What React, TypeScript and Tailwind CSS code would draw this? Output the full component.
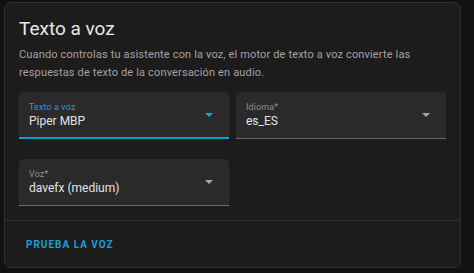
import React from 'react';

interface SelectFieldProps {
  label: string;
  value: string;
  focused?: boolean;
}

const SelectField = ({ label, value, focused = false }: SelectFieldProps) => {
  return (
    <div
      className={`relative h-[47px] rounded-t-[4px] bg-[#2a2a2a] ${
        focused ? 'border-b-2 border-[#0e9ad7]' : 'border-b border-[#6a6a6a]'
      }`}
    >
      <div
        className={`absolute left-[10px] top-[10px] text-[9px] leading-[10px] tracking-[0.1px] ${
          focused ? 'text-[#1a9fd8]' : 'text-[#8f8f8f]'
        }`}
      >
        {label}
      </div>
      <div className="absolute left-[10px] top-[21px] text-[12px] leading-[16px] text-[#e3e3e3]">{value}</div>
      <svg className="absolute right-[16px] top-[21px]" width="8" height="4" viewBox="0 0 8 4">
        <path d="M0 0 L8 0 L4 4 Z" fill={focused ? '#1a9fd8' : '#a8a8a8'} />
      </svg>
    </div>
  );
};

const App = () => {
  return (
    <div
      className="w-[474px] h-[273px] bg-[#111111] pt-[2px] pl-[4px]"
      style={{ fontFamily: 'Roboto, "Liberation Sans", sans-serif' }}
    >
      <div className="w-[457px] h-[266px] rounded-[7px] border border-[#2f2f2f] bg-[#1c1c1c] flex flex-col">
        <div className="px-[14px] pt-[13px]">
          <h2 className="text-[19px] leading-[25px] text-[#e8e8e8] font-normal">Texto a voz</h2>
          <p className="mt-[5px] text-[11px] leading-[18px] tracking-[0.15px] text-[#a3a3a3]">
            Cuando controlas tu asistente con la voz, el motor de texto a voz convierte las respuestas de texto de la
            conversación en audio.
          </p>
          <div className="mt-[10px] grid grid-cols-2 gap-x-[7px] gap-y-[20px]">
            <SelectField label="Texto a voz" value="Piper MBP" focused />
            <SelectField label="Idioma*" value="es_ES" />
            <SelectField label="Voz*" value="davefx (medium)" />
          </div>
        </div>
        <div className="mt-auto border-t border-[#2f2f2f] h-[47px] flex items-center px-[21px]">
          <button className="text-[10px] font-bold tracking-[1px] text-[#1a9fd8]">PRUEBA LA VOZ</button>
        </div>
      </div>
    </div>
  );
};

export default App;
